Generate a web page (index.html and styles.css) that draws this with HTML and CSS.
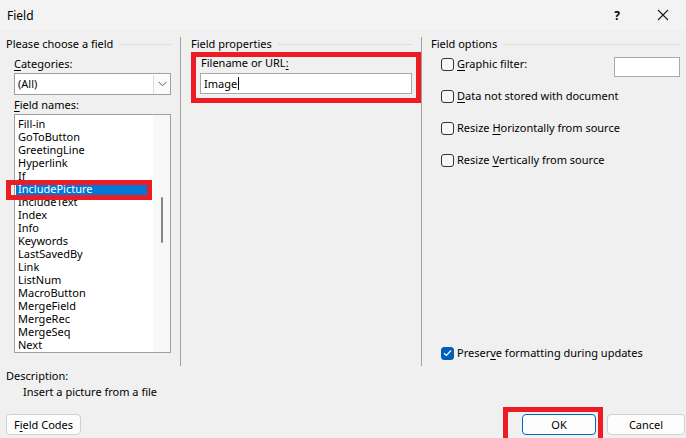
FILE: index.html
```html
<!DOCTYPE html>
<html lang="en">
<head>
    <meta charset="UTF-8">
    <title>Field</title>
    <link rel="stylesheet" href="styles.css">
</head>
<body>
    <div class="dialog">
        <div class="titlebar">
            <span class="title">Field</span>
            <span class="help">?</span>
            <span class="close">
                <svg width="12" height="12" viewBox="0 0 12 12"><path d="M1 1 L11 11 M11 1 L1 11" stroke="#1a1a1a" stroke-width="1.1" fill="none"/></svg>
            </span>
        </div>

        <div class="panes">
            <!-- colonne gauche -->
            <div class="pane pane-choose">
                <div class="group-title"><span>Please choose a field</span></div>
                <div class="label label-categories"><u>C</u>ategories:</div>
                <div class="combo">
                    <span class="combo-text">(All)</span>
                    <span class="combo-btn">
                        <svg width="9" height="6" viewBox="0 0 9 6"><path d="M0.5 0.8 L4.5 4.8 L8.5 0.8" stroke="#5a5a5a" stroke-width="1" fill="none"/></svg>
                    </span>
                </div>
                <div class="label label-names"><u>F</u>ield names:</div>
                <div class="listbox">
                    <ul class="items">
                        <li>Fill-in</li>
                        <li>GoToButton</li>
                        <li>GreetingLine</li>
                        <li>Hyperlink</li>
                        <li>If</li>
                        <li class="selected">IncludePicture</li>
                        <li>IncludeText</li>
                        <li>Index</li>
                        <li>Info</li>
                        <li>Keywords</li>
                        <li>LastSavedBy</li>
                        <li>Link</li>
                        <li>ListNum</li>
                        <li>MacroButton</li>
                        <li>MergeField</li>
                        <li>MergeRec</li>
                        <li>MergeSeq</li>
                        <li>Next</li>
                    </ul>
                    <div class="scrollbar"><div class="thumb"></div></div>
                </div>
            </div>

            <!-- colonne centrale -->
            <div class="pane pane-props">
                <div class="group-title"><span>Field properties</span></div>
                <div class="label label-indent">Filename or URL<u>:</u></div>
                <div class="textbox textbox-url">Image<span class="caret"></span></div>
            </div>

            <!-- colonne droite -->
            <div class="pane pane-options">
                <div class="group-title"><span>Field options</span></div>
                <div class="options">
                    <div class="option">
                        <span class="check"></span>
                        <span><u>G</u>raphic filter:</span>
                        <span class="textbox textbox-filter"></span>
                    </div>
                    <div class="option">
                        <span class="check"></span>
                        <span><u>D</u>ata not stored with document</span>
                    </div>
                    <div class="option">
                        <span class="check"></span>
                        <span>Resize <u>H</u>orizontally from source</span>
                    </div>
                    <div class="option">
                        <span class="check"></span>
                        <span>Resize <u>V</u>ertically from source</span>
                    </div>
                </div>
                <div class="option option-bottom">
                    <span class="check checked">
                        <svg width="9" height="8" viewBox="0 0 9 8"><path d="M1 4.2 L3.4 6.5 L8 1.5" stroke="#fff" stroke-width="1.2" fill="none"/></svg>
                    </span>
                    <span>Preser<u>v</u>e formatting during updates</span>
                </div>
            </div>
        </div>

        <div class="description">
            <div>Description:</div>
            <div class="description-text">Insert a picture from a file</div>
        </div>

        <div class="buttons">
            <button class="btn btn-codes">F<u>i</u>eld Codes</button>
            <span class="spacer"></span>
            <button class="btn btn-ok">OK</button>
            <button class="btn btn-cancel">Cancel</button>
        </div>
    </div>

    <!-- cadres rouges d'annotation -->
    <div class="mark mark-list"></div>
    <div class="mark mark-props"></div>
    <div class="mark mark-ok"></div>
</body>
</html>
```

FILE: styles.css
```css
body {
    margin: 0;
    background: #f0f0f0;
    font-family: "Noto Sans", sans-serif;
    font-size: 11px;
    color: #000;
    width: 686px;
    height: 438px;
    overflow: hidden;
    position: relative;
}
u {
    text-decoration-thickness: 1px;
    text-underline-offset: 2px;
}
.titlebar {
    height: 30px;
    background: #f3f3f3;
    display: flex;
    align-items: center;
    font-size: 12px;
}
.title {
    padding-left: 7px;
    flex: 1;
}
.help {
    width: 14px;
    text-align: center;
    font-weight: bold;
    font-size: 12px;
    margin-right: 33px;
}
.close {
    display: flex;
    margin-right: 17px;
}
.panes {
    display: flex;
    margin-top: 7px;
    height: 329px;
}
.pane {
    display: flex;
    flex-direction: column;
    line-height: 14px;
}
.pane-choose {
    width: 180px;
    border-right: 1px solid #a0a0a0;
}
.pane-props {
    width: 240px;
    border-right: 1px solid #a0a0a0;
}
.pane-options {
    flex: 1;
}
.group-title {
    display: flex;
    align-items: center;
    height: 14px;
}
.group-title::after {
    content: "";
    flex: 1;
    height: 1px;
    background: #dcdcdc;
    margin-left: 6px;
}
.pane-choose .group-title {
    padding-left: 6px;
    margin-right: 9px;
}
.pane-props .group-title {
    padding-left: 10px;
    margin-right: 9px;
}
.pane-options .group-title {
    padding-left: 9px;
    margin-right: 6px;
}
.label {
    margin-left: 14px;
    height: 14px;
}
.label-categories {
    margin-top: 6px;
}
.label-names {
    margin-top: 3px;
}
.label-indent {
    margin-left: 20px;
    margin-top: 5px;
}
.combo {
    margin: 2px 0 0 14px;
    width: 155px;
    height: 20px;
    border: 1px solid #a0a0a0;
    background: #fff;
    display: flex;
    align-items: center;
}
.combo-text {
    flex: 1;
    padding-left: 3px;
}
.combo-btn {
    width: 16px;
    height: 19px;
    border-left: 1px solid #dadada;
    background: #fbfbfb;
    display: flex;
    align-items: center;
    justify-content: center;
}
.listbox {
    margin: 2px 0 0 14px;
    width: 155px;
    height: 237px;
    border: 1px solid #a0a0a0;
    background: #fff;
    display: flex;
    overflow: hidden;
}
.items {
    list-style: none;
    margin: 0;
    padding: 2px 0 0 1px;
    flex: 1;
}
.items li {
    height: 13px;
    line-height: 13px;
    padding-left: 2px;
    white-space: nowrap;
}
.items li.selected {
    background: #0078d7;
    color: #fff;
    width: 129px;
}
.scrollbar {
    width: 17px;
    background: #f8f8f8;
    display: flex;
    justify-content: center;
    padding-top: 82px;
}
.thumb {
    width: 2px;
    height: 46px;
    background: #858585;
    border-radius: 1px;
}
.textbox {
    background: #fff;
    border: 1px solid #a9a9a9;
    box-sizing: border-box;
}
.textbox-url {
    margin: 3px 0 0 19px;
    width: 212px;
    height: 21px;
    padding-left: 3px;
    display: flex;
    align-items: center;
}
.caret {
    width: 1px;
    height: 13px;
    background: #000;
    margin-left: 1px;
}
.options {
    display: flex;
    flex-direction: column;
    gap: 12px;
    margin-top: 3px;
}
.option {
    display: flex;
    align-items: center;
    height: 20px;
    padding-left: 19px;
    gap: 3px;
}
.check {
    width: 11px;
    height: 11px;
    border: 1px solid #333;
    border-radius: 3px;
    background: #f7f7f7;
    display: flex;
    align-items: center;
    justify-content: center;
}
.check.checked {
    background: #005fb8;
    border-color: #005fb8;
}
.textbox-filter {
    margin-left: auto;
    margin-right: 6px;
    margin-top: 6px;
    width: 66px;
    height: 20px;
}
.option-bottom {
    margin-top: auto;
    margin-bottom: 3px;
}
.description {
    margin-top: 3px;
    padding-left: 6px;
    line-height: 14px;
    display: flex;
    flex-direction: column;
    gap: 2px;
}
.description-text {
    padding-left: 17px;
}
.buttons {
    display: flex;
    margin-top: 15px;
    padding: 0 1px 0 6px;
    gap: 11px;
}
.spacer {
    flex: 1;
}
.btn {
    font-family: inherit;
    font-size: 11px;
    height: 21px;
    padding: 0;
    background: #fdfdfd;
    border: 1px solid #d0d0d0;
    border-radius: 4px;
    color: #000;
}
.btn-codes {
    width: 75px;
}
.btn-ok {
    width: 74px;
    border-color: #0067c0;
}
.btn-cancel {
    width: 78px;
}
.mark {
    position: absolute;
    border: 5px solid #ed1c24;
    box-sizing: border-box;
}
.mark-list {
    left: 6px;
    top: 180px;
    width: 146px;
    height: 20px;
}
.mark-props {
    left: 191px;
    top: 52px;
    width: 230px;
    height: 51px;
}
.mark-ok {
    left: 503px;
    top: 407px;
    width: 100px;
    height: 36px;
}
```
